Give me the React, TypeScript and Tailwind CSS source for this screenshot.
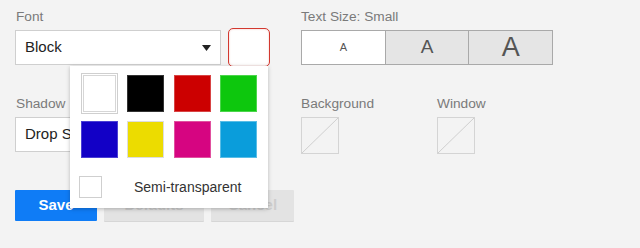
const swatches = [
  { c: "bg-white", b: "border-[#d6d6d6]", selected: true },
  { c: "bg-black", b: "border-[#333]" },
  { c: "bg-[#cc0000]", b: "border-[#d84444]" },
  { c: "bg-[#0dc70d]", b: "border-[#4bd64b]" },
  { c: "bg-[#1200c6]", b: "border-[#4a3fd4]" },
  { c: "bg-[#ecdc00]", b: "border-[#ddd]" },
  { c: "bg-[#d60581]", b: "border-[#e0509f]" },
  { c: "bg-[#0a9ddb]", b: "border-[#59bde6]" },
];

function Label({ children }: { children: React.ReactNode }) {
  return <div className="h-4 text-[13.7px] leading-4 text-[#7a7a7a]">{children}</div>;
}

function Select({ value }: { value: string }) {
  return (
    <div className="flex h-[35px] w-[206px] items-center justify-between border border-[#cfcfcf] bg-white pl-[9px] pr-[9px] text-[15px] text-[#222]">
      <span>{value}</span>
      <svg width="9" height="6" viewBox="0 0 9 6">
        <path d="M0 0 L9 0 L4.5 6 Z" fill="#222" />
      </svg>
    </div>
  );
}

function NoColor() {
  return (
    <div className="h-[37px] w-[38px] border border-[#d4d4d4]">
      <svg width="36" height="35" viewBox="0 0 36 35">
        <line x1="0" y1="35" x2="36" y2="0" stroke="#cfcfcf" strokeWidth="1" />
      </svg>
    </div>
  );
}

export default function App() {
  return (
    <div
      className="relative h-[248px] w-[640px] overflow-hidden bg-[#f3f3f3] pl-[15px] pt-[9px]"
      style={{ fontFamily: '"Liberation Sans", Arial, sans-serif' }}
    >
      <div className="flex gap-[31px]">
        <div className="w-[255px]">
          <Label>
            <span className="pl-px">Font</span>
          </Label>
          <div className="mt-[5px] flex items-center gap-[7px]">
            <Select value="Block" />
            <div className="-my-[2px] h-[39px] w-[42px] rounded-[5px] border border-[#d2382f] bg-white shadow-[inset_0_0_2px_rgba(210,56,47,0.35)]" />
          </div>
        </div>
        <div>
          <Label>Text Size: Small</Label>
          <div className="mt-[5px] flex h-[35px] w-[252px] border border-[#a9a9a9] text-[#555]">
            <div className="flex flex-1 items-center justify-center bg-white text-[11px]">A</div>
            <div className="flex flex-1 items-center justify-center border-l border-[#a9a9a9] bg-[#e5e5e5] text-[19px]">A</div>
            <div className="flex flex-1 items-center justify-center border-l border-[#a9a9a9] bg-[#e5e5e5] text-[27px]">A</div>
          </div>
        </div>
      </div>

      <div className="mt-[31px] flex gap-[31px]">
        <div className="w-[255px]">
          <Label>
            <span className="pl-px">Shadow</span>
          </Label>
          <div className="mt-[5px]">
            <div className="flex h-[35px] w-[206px] items-center border border-[#cfcfcf] bg-white pl-[9px] text-[15px] text-[#222]">
              Drop Shadow
            </div>
          </div>
        </div>
        <div className="flex gap-[98px]">
          <div className="w-[38px]">
            <Label>Background</Label>
            <div className="mt-[5px]">
              <NoColor />
            </div>
          </div>
          <div>
            <Label>Window</Label>
            <div className="mt-[5px]">
              <NoColor />
            </div>
          </div>
        </div>
      </div>

      <div className="mt-[36px] flex gap-[7px] text-[15px] font-bold">
        <button className="h-[31px] w-[82px] rounded-[1px] bg-[#0f7cf6] text-white">Save</button>
        <button className="h-[31px] w-[100px] rounded-[1px] bg-[#e3e3e3] text-[#cdcdcd] shadow-[0_1px_0_#d6d6d6]">Defaults</button>
        <button className="h-[31px] w-[83px] rounded-[1px] bg-[#e3e3e3] text-[#cdcdcd] shadow-[0_1px_0_#d6d6d6]">Cancel</button>
      </div>

      <div className="absolute left-[70px] top-[66px] w-[198px] bg-white px-[11px] pb-[10px] pt-[7px] shadow-[0_1px_4px_rgba(0,0,0,0.25)]">
        <div className="grid grid-cols-4 gap-x-[9px] gap-y-[5px]">
          {swatches.map((s, i) => (
            <div key={i} className="flex h-[41px] items-center justify-center">
              <div
                className={
                  s.selected
                    ? "h-[41px] w-[41px] border border-[#cfcfcf] p-[1px]"
                    : "h-[37px] w-[37px]"
                }
              >
                <div className={`h-full w-full border ${s.c} ${s.b}`} />
              </div>
            </div>
          ))}
        </div>
        <div className="mt-[16px] flex items-center">
          <div className="-ml-[2px] h-[22px] w-[23px] border border-[#cfcfcf] bg-white" />
          <span className="ml-[32px] text-[14px] text-[#333]">Semi-transparent</span>
        </div>
      </div>
    </div>
  );
}
